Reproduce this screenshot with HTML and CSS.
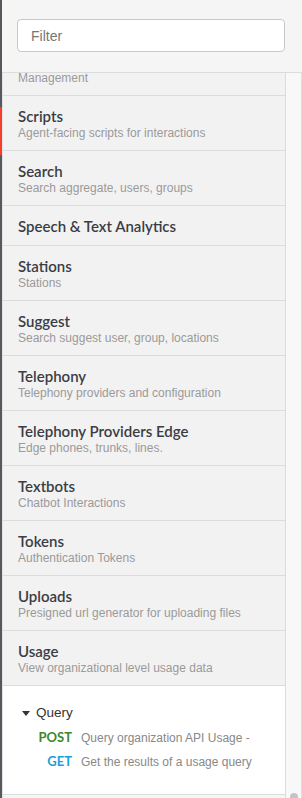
FILE: index.html
```html
<!DOCTYPE html>
<html>
<head>
<meta charset="utf-8">
<link rel="stylesheet" href="styles.css">
</head>
<body>
<div class="page">
  <div class="rail"><div class="rail-mark"></div></div>
  <div class="main">
    <div class="header">
      <input class="filter" type="text" placeholder="Filter">
    </div>
    <div class="body">
      <div class="viewport">
        <div class="list">
          <div class="item partial">
            <div class="title">Workforce Management</div>
            <div class="sub">Adherence, Schedules, Forecasting</div>
            <div class="sub">Management</div>
          </div>
          <div class="item"><div class="title">Scripts</div><div class="sub">Agent-facing scripts for interactions</div></div>
          <div class="item"><div class="title">Search</div><div class="sub">Search aggregate, users, groups</div></div>
          <div class="item"><div class="title">Speech &amp; Text Analytics</div></div>
          <div class="item"><div class="title">Stations</div><div class="sub">Stations</div></div>
          <div class="item"><div class="title">Suggest</div><div class="sub">Search suggest user, group, locations</div></div>
          <div class="item"><div class="title">Telephony</div><div class="sub">Telephony providers and configuration</div></div>
          <div class="item"><div class="title">Telephony Providers Edge</div><div class="sub">Edge phones, trunks, lines.</div></div>
          <div class="item"><div class="title">Textbots</div><div class="sub">Chatbot Interactions</div></div>
          <div class="item"><div class="title">Tokens</div><div class="sub">Authentication Tokens</div></div>
          <div class="item"><div class="title">Uploads</div><div class="sub">Presigned url generator for uploading files</div></div>
          <div class="item"><div class="title">Usage</div><div class="sub">View organizational level usage data</div></div>
          <div class="expanded">
            <div class="group"><span class="caret"></span>Query</div>
            <div class="op"><span class="verb post">POST</span><span class="desc">Query organization API Usage -</span></div>
            <div class="op"><span class="verb get">GET</span><span class="desc">Get the results of a usage query</span></div>
          </div>
        </div>
      </div>
      <div class="track"><div class="thumb"></div></div>
    </div>
  </div>
</div>
</body>
</html>
```
FILE: styles.css
```css
* { box-sizing: border-box; }
html, body { margin: 0; padding: 0; }
body {
  width: 302px;
  height: 798px;
  overflow: hidden;
  background: #f5f5f5;
  font-family: "Liberation Sans", Arial, sans-serif;
}
.page {
  display: flex;
  height: 798px;
}
.rail {
  width: 2px;
  flex: none;
  background: #55585d;
  display: flex;
  flex-direction: column;
}
.rail-mark {
  margin-top: 107px;
  height: 48px;
  background: #f2402f;
}
.main {
  flex: 1;
  display: flex;
  flex-direction: column;
  min-width: 0;
}
.header {
  height: 73px;
  flex: none;
  background: #f5f5f5;
  border-bottom: 1px solid #dcdcdc;
  padding: 19px 17px 0 15px;
}
.filter {
  display: block;
  width: 100%;
  height: 33px;
  border: 1px solid #c8c8c8;
  border-radius: 4px;
  background: #fff;
  padding: 0 13px;
  font-family: "Liberation Sans", Arial, sans-serif;
  font-size: 14px;
  color: #333;
  outline: none;
}
.filter::placeholder { color: #777; }
.body {
  flex: 1;
  display: flex;
  min-height: 0;
}
.viewport {
  flex: 1;
  overflow: hidden;
  border-left: 1px solid #e2e2e2;
  border-right: 1px solid #dcdcdc;
}
.list {
  margin-top: -48px;
}
.item {
  background: #f2f2f2;
  border-bottom: 1px solid #dcdcdc;
  padding: 11px 15px 9px;
}
.title {
  font-family: Lato, "Liberation Sans", sans-serif;
  font-weight: 600;
  font-size: 15px;
  line-height: 18px;
  color: #3a3d44;
}
.sub {
  font-size: 12px;
  line-height: 15px;
  padding-top: 1px;
  color: #9a9a9a;
  white-space: nowrap;
}
.title:only-child { padding-bottom: 1px; }
.expanded {
  background: #fff;
  border-bottom: 1px solid #dcdcdc;
  padding: 17px 0 0 16px;
  height: 109px;
}
.group {
  display: flex;
  align-items: center;
  font-size: 13.5px;
  line-height: 20px;
  color: #333;
}
.caret {
  width: 0;
  height: 0;
  border-left: 4px solid transparent;
  border-right: 4px solid transparent;
  border-top: 5px solid #333;
  margin: 0 6px 0 3px;
}
.op {
  display: flex;
  align-items: baseline;
  margin-top: 4px;
  line-height: 20px;
}
.op + .op { margin-top: 3px; }
.verb {
  width: 53px;
  text-align: right;
  font-family: Lato, "Liberation Sans", sans-serif;
  font-weight: 700;
  font-size: 13px;
  margin-right: 9px;
}
.post { color: #3c8a2c; }
.get { color: #1ba0d9; }
.desc {
  font-size: 12px;
  color: #888;
  white-space: nowrap;
}
.track {
  width: 16px;
  flex: none;
  background: #f8f8f8;
  border-right: 1px solid #dedede;
  display: flex;
  flex-direction: column;
  justify-content: flex-end;
  align-items: center;
}
.thumb {
  width: 8px;
  height: 5px;
  border-radius: 4px 4px 0 0;
  background: #c4c4c4;
}
```
